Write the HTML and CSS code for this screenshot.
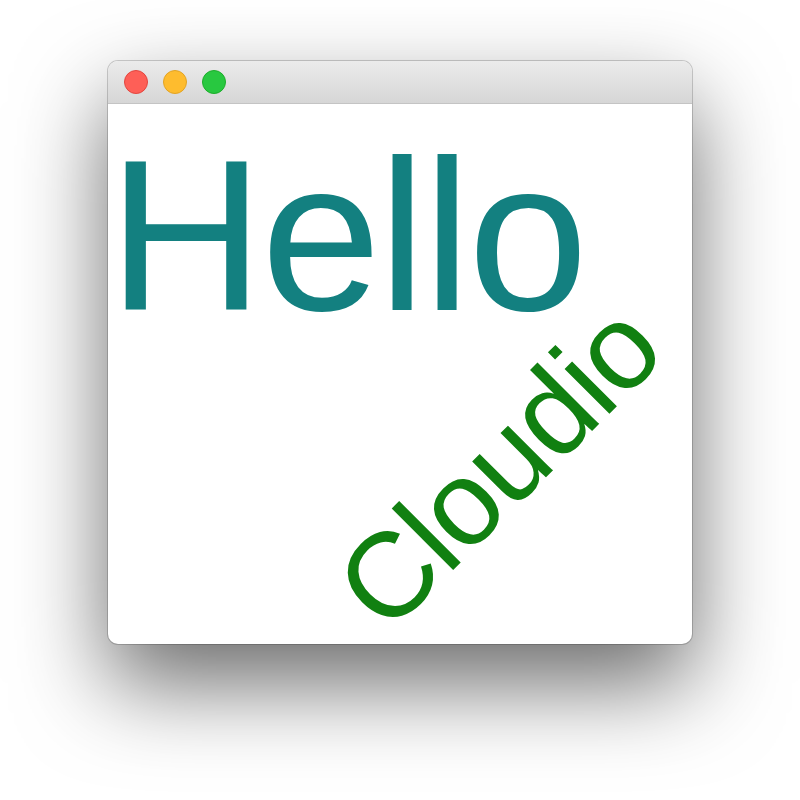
FILE: index.html
```html
<!DOCTYPE html>
<html>
<head>
<meta charset="utf-8">
<link rel="stylesheet" href="styles.css">
</head>
<body>
<div class="window">
  <div class="titlebar">
    <span class="light red"></span>
    <span class="light yellow"></span>
    <span class="light green"></span>
  </div>
  <div class="content">
    <div class="hello">Hello</div>
    <span class="cloudio">Cloudio</span>
  </div>
</div>
</body>
</html>
```

FILE: styles.css
```css
html, body {
  margin: 0;
  padding: 0;
  background: #ffffff;
  width: 800px;
  height: 800px;
  overflow: hidden;
}
.window {
  margin-left: 108px;
  margin-top: 61px;
  width: 584px;
  height: 583px;
  border-radius: 10px;
  background: #ffffff;
  box-shadow: 0 40px 90px rgba(0,0,0,0.58), 0 0 0 1px rgba(0,0,0,0.18);
  overflow: hidden;
  display: flex;
  flex-direction: column;
}
.titlebar {
  height: 42px;
  flex: none;
  background: linear-gradient(#ebebeb, #d6d6d6);
  border-bottom: 1px solid #c4c4c4;
  display: flex;
  align-items: center;
  gap: 15px;
  padding-left: 16px;
}
.light {
  width: 24px;
  height: 24px;
  border-radius: 50%;
  box-sizing: border-box;
}
.red { background: #fe5f57; border: 1px solid #e2463f; }
.yellow { background: #febc2e; border: 1px solid #e1a325; }
.green { background: #28c840; border: 1px solid #1dad2b; }
.content {
  flex: 1;
  position: relative;
  overflow: hidden;
}
.hello {
  font-family: "Liberation Sans", Arial, sans-serif;
  font-size: 216px;
  line-height: 216px;
  letter-spacing: -3px;
  color: #138080;
  margin-top: 23px;
  white-space: nowrap;
}
.cloudio {
  position: absolute;
  left: 279px;
  top: 430px;
  font-family: "Liberation Sans", Arial, sans-serif;
  font-size: 120px;
  line-height: 120px;
  letter-spacing: -1.5px;
  color: #118011;
  white-space: nowrap;
  transform-origin: 0 101.6px;
  transform: rotate(-45deg);
}
```
